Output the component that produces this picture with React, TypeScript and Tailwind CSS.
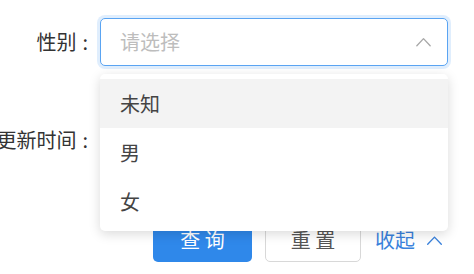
import { useState } from "react";

const options = ["未知", "男", "女"];

function Chevron({ className }: { className?: string }) {
  return (
    <svg viewBox="0 0 20 12" className={className} fill="none" stroke="currentColor" strokeWidth="1.6" strokeLinecap="round" strokeLinejoin="round">
      <polyline points="2,10.5 10,2 18,10.5" />
    </svg>
  );
}

export default function App() {
  const [hover] = useState(0);

  return (
    <div className="w-[474px] h-[274px] overflow-hidden bg-white pt-[18px] text-[20px] leading-none" style={{ fontFamily: '"Noto Sans CJK SC", "Noto Sans", sans-serif' }}>
      {/* 性别 */}
      <div className="flex h-[48px] items-center">
        <label className="w-[100px] pr-[12px] flex justify-end whitespace-nowrap text-[#333]">
          性别<span className="ml-[6px]">:</span>
        </label>
        <div className="relative w-[348px]">
          <div className="h-[48px] flex items-center justify-between border border-[#5aa4f2] rounded-[5px] pl-[19px] pr-[15px] shadow-[0_0_0_3px_rgba(45,140,240,0.15)] bg-white">
            <span className="text-[#bdbdbd]">请选择</span>
            <Chevron className="w-[17px] h-[10px] text-[#a8a8a8]" />
          </div>

          {/* dropdown */}
          <div className="absolute left-0 right-0 top-[56px] z-10 bg-white rounded-[5px] py-[5px] shadow-[0_3px_12px_rgba(0,0,0,0.15)]">
            {options.map((o, i) => (
              <div
                key={o}
                className={`h-[49px] flex items-center pl-[20px] text-[#444] ${i === hover ? "bg-[#f3f3f3]" : ""}`}
              >
                {o}
              </div>
            ))}
          </div>
        </div>
      </div>

      {/* 更新时间 */}
      <div className="flex h-[48px] items-center mt-[50px]">
        <label className="w-[100px] pr-[12px] flex justify-end whitespace-nowrap text-[#333]">
          更新时间<span className="ml-[6px]">:</span>
        </label>
        <div className="w-[348px] h-[48px]" />
      </div>

      {/* actions */}
      <div className="flex items-center h-[44px] mt-[54px] pl-[153px]">
        <button className="w-[99px] h-[44px] rounded-[5px] bg-[#2f88ea] text-white">查 询</button>
        <button className="ml-[13px] w-[96px] h-[44px] rounded-[5px] border border-[#d8d8d8] bg-white text-[#555]">重 置</button>
        <button className="ml-[14px] flex items-center text-[#3a82dc]">
          收起
          <Chevron className="ml-[11px] w-[17px] h-[11px]" />
        </button>
      </div>
    </div>
  );
}
